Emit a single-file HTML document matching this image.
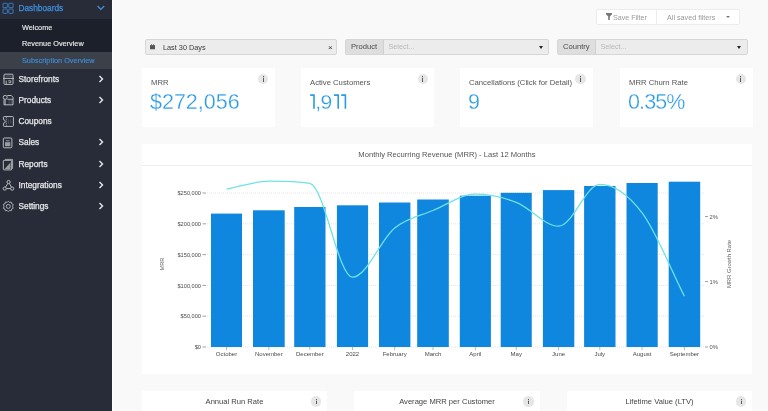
<!DOCTYPE html>
<html><head><meta charset="utf-8">
<style>
*{box-sizing:border-box;margin:0;padding:0}
html,body{width:768px;height:411px;overflow:hidden;background:#f9f9f9;font-family:"Liberation Sans",sans-serif}
.abs{position:absolute}
body{will-change:transform}
.nav .t{-webkit-text-stroke:0.25px currentColor}
.si{-webkit-text-stroke:0.12px currentColor}
#sb{position:absolute;left:0;top:0;width:112px;height:411px;background:#272c38}
.nav{position:absolute;left:0;width:112px;height:21px;color:#e9eaec;font-size:8.3px}
.nav .t{position:absolute;left:18.5px;top:50%;transform:translateY(-50%);white-space:nowrap}
.nav svg.ic{position:absolute;left:3px;top:50%;margin-top:-5.5px}
.nav svg.ch{position:absolute;left:97px;top:50%;margin-top:-4px}
#sub{position:absolute;left:0;top:18px;width:112px;height:51px;background:#1c202a}
.si{position:absolute;left:22px;font-size:7.3px;color:#eeeeee;white-space:nowrap}
#hl{position:absolute;left:0;top:52px;width:112px;height:17px;background:#3c4049}
.card{position:absolute;background:#fff}
.lbl{position:absolute;font-size:7.7px;color:#545454;white-space:nowrap}
.val{position:absolute;font-size:21.5px;color:#2b9be6;white-space:nowrap;letter-spacing:0px;-webkit-text-stroke:0.28px #fff}
.info{position:absolute;width:10.6px;height:10.6px;border-radius:50%;background:#e6e6e6;font-size:0}.info::after{content:"";position:absolute;left:4.8px;top:2.3px;width:1px;height:5.8px;background:linear-gradient(#5a5a5a 0,#5a5a5a 1.2px,#bbb 1.2px,#bbb 1.7px,#5a5a5a 1.7px)}
.sel{position:absolute;top:39px;height:15.5px;background:#ececec;border:1px solid #d6d6d6;border-radius:2px}
.sel .lab{position:absolute;left:0;top:0;bottom:0;background:#dedede;border-right:1px solid #d0d0d0;font-size:7.6px;color:#4a4a4a;line-height:13.5px;padding-left:5px}
.sel .ph{position:absolute;top:0;font-size:7.2px;color:#b8b8b8;line-height:13.5px}
.caret{position:absolute;width:0;height:0;border-left:2.7px solid transparent;border-right:2.7px solid transparent;border-top:3.2px solid #222}
.ax{position:absolute;font-size:6px;color:#444;white-space:nowrap}
</style></head><body>

<div class="abs" style="left:112px;top:0;width:2px;height:411px;background:#fdfdfd"></div>
<div id="sb">
  <div id="sub" style="top:19.4px;height:32.6px"></div>
  <div id="hl"></div>
  <svg class="abs" style="left:0;top:0" width="20" height="220" viewBox="0 0 20 220" fill="none" stroke-linejoin="round">
    <g stroke="#3a80c8" stroke-width="0.9">
      <rect x="3" y="3.3" width="4.3" height="4.3" rx="0.4"/><rect x="8.8" y="3.3" width="4.3" height="4.3" rx="0.4"/>
      <rect x="3" y="9" width="4.3" height="4.3" rx="0.4"/><rect x="8.8" y="9" width="4.3" height="4.3" rx="0.4"/>
    </g>
    <g stroke="#b9bbc0" stroke-width="1">
      <rect x="4" y="74.2" width="9" height="10.2" rx="0.8"/>
      <path d="M3 78.4H14"/>
      <path d="M5.5 76.2H11.5" stroke="#555a63" stroke-width="1.2"/>
      <path d="M6.2 84V80.6M8.2 80.8H10.8V82.6H8.6" stroke-width="0.9"/>
    </g>
    <g stroke="#b9bbc0" stroke-width="1">
      <path d="M4 99.5V104.8H13V97.3L11.3 95.5H7.3"/>
      <circle cx="5.2" cy="97.4" r="2"/>
      <path d="M5.2 99.4V104.8M7.4 99.3H13" stroke-width="0.9"/>
      <path d="M9.2 100V104.3M11.2 100V104.3" stroke="#6a6d74" stroke-width="0.7"/>
    </g>
    <g stroke="#b9bbc0" stroke-width="1">
      <path d="M4.2 116.6H12.6A0.8 0.8 0 0 1 13.4 117.4V125.6A0.8 0.8 0 0 1 12.6 126.4H4.2A0.8 0.8 0 0 1 3.4 125.6V123.3A1.8 1.8 0 0 0 3.4 119.7V117.4A0.8 0.8 0 0 1 4.2 116.6Z"/>
      <path d="M6.4 117.2V126" stroke-dasharray="1.1 0.9" stroke-width="0.8"/>
      <path d="M8.6 119.3V123.8M10.8 119.3V123.8" stroke="#5f626a" stroke-width="0.6"/>
    </g>
    <g stroke="#b9bbc0" stroke-width="1">
      <rect x="3.3" y="138" width="8.6" height="9.8" rx="1"/>
      <rect x="5" y="142.2" width="5.3" height="4" fill="#9a9ca2" stroke="none"/>
      <path d="M6 140.8H9.5" stroke-width="0.8"/>
    </g>
    <g stroke="#b9bbc0" stroke-width="1">
      <rect x="3.3" y="160.3" width="8.4" height="9.6" rx="0.8"/>
      <path d="M5 159.4H12.6V168.8" stroke-width="0.8"/>
      <path d="M4.5 169L10.5 162.5V169Z" fill="#9a9ca2" stroke="none"/>
    </g>
    <g stroke="#b9bbc0" stroke-width="1">
      <circle cx="8.6" cy="182" r="1.6"/><circle cx="4.7" cy="188.6" r="1.6"/><circle cx="12.2" cy="188.6" r="1.6"/>
      <path d="M7.8 183.4L5.5 187.2M9.4 183.4L11.4 187.2M6.3 188.6H10.6"/>
    </g>
    <g stroke="#b9bbc0" stroke-width="0.9">
      <circle cx="8.3" cy="206.4" r="2"/>
      <path d="M8.3 201.2L9.5 202.4L11.2 202L11.6 203.7L13.2 204.4L12.6 206.4L13.2 208.4L11.6 209.1L11.2 210.8L9.5 210.4L8.3 211.6L7.1 210.4L5.4 210.8L5 209.1L3.4 208.4L4 206.4L3.4 204.4L5 203.7L5.4 202L7.1 202.4Z"/>
    </g>
  </svg>

  <div class="nav" style="top:-2.5px;color:#3f8fdc">
    <span class="t">Dashboards</span>
    <svg class="ch" width="8" height="8" viewBox="0 0 8 8" fill="none" stroke="#4a8ee0" stroke-width="1.2" style="left:96.5px"><path d="M0.6 2 L3.9 5.3 L7.2 2"/></svg>
  </div>
  <div class="si" style="top:22.7px">Welcome</div>
  <div class="si" style="top:39.1px">Revenue Overview</div>
  <div class="si" style="top:55.7px;color:#3f8fdc">Subscription Overview</div>

  <div class="nav" style="top:68px">
    <span class="t">Storefronts</span>
    <svg class="ch" width="8" height="8" viewBox="0 0 8 8" fill="none" stroke="#e9eaec" stroke-width="1.4"><path d="M2.5 1 L5.5 4 L2.5 7"/></svg>
  </div>
  <div class="nav" style="top:89.5px">
    <span class="t">Products</span>
    <svg class="ch" width="8" height="8" viewBox="0 0 8 8" fill="none" stroke="#e9eaec" stroke-width="1.4"><path d="M2.5 1 L5.5 4 L2.5 7"/></svg>
  </div>
  <div class="nav" style="top:110.5px">
    <span class="t">Coupons</span>
  </div>
  <div class="nav" style="top:131.5px">
    <span class="t">Sales</span>
    <svg class="ch" width="8" height="8" viewBox="0 0 8 8" fill="none" stroke="#e9eaec" stroke-width="1.4"><path d="M2.5 1 L5.5 4 L2.5 7"/></svg>
  </div>
  <div class="nav" style="top:153px">
    <span class="t">Reports</span>
    <svg class="ch" width="8" height="8" viewBox="0 0 8 8" fill="none" stroke="#e9eaec" stroke-width="1.4"><path d="M2.5 1 L5.5 4 L2.5 7"/></svg>
  </div>
  <div class="nav" style="top:174px">
    <span class="t">Integrations</span>
    <svg class="ch" width="8" height="8" viewBox="0 0 8 8" fill="none" stroke="#e9eaec" stroke-width="1.4"><path d="M2.5 1 L5.5 4 L2.5 7"/></svg>
  </div>
  <div class="nav" style="top:195.5px">
    <span class="t">Settings</span>
    <svg class="ch" width="8" height="8" viewBox="0 0 8 8" fill="none" stroke="#e9eaec" stroke-width="1.4"><path d="M2.5 1 L5.5 4 L2.5 7"/></svg>
  </div>
</div>

<!-- top buttons -->
<div class="abs" style="left:596px;top:8.7px;width:144px;height:16.5px;background:#fff;border:1px solid #ececec;border-radius:2px"></div>
<div class="abs" style="left:655.8px;top:8.7px;width:1px;height:16.5px;background:#ececec"></div>
<svg class="abs" style="left:606px;top:12.5px" width="6" height="7" viewBox="0 0 6 7"><path d="M0 0h6v1.2L3.8 3.4V7H2.2V3.4L0 1.2z" fill="#777"/></svg>
<div class="abs" style="left:613px;top:14px;font-size:7.1px;color:#999">Save Filter</div>
<div class="abs" style="left:667px;top:12.5px;font-size:7.2px;color:#999">All saved filters</div>
<div class="caret" style="left:726px;top:16px;border-left-width:2.5px;border-right-width:2.5px;border-top:2.5px solid #777"></div>

<!-- selects -->
<div class="sel" style="left:145px;width:192px">
  <svg class="abs" style="left:4px;top:4px" width="5" height="5.5" viewBox="0 0 5 5"><rect x="0" y="0.9" width="5" height="4.1" fill="#555"/><rect x="1" y="0" width="0.8" height="1.2" fill="#555"/><rect x="3.2" y="0" width="0.8" height="1.2" fill="#555"/></svg>
  <div class="abs" style="left:17px;top:0.8px;font-size:7.3px;color:#3a3a3a;line-height:13.5px">Last 30 Days</div>
  <div class="abs" style="left:182px;top:0.5px;font-size:8px;color:#333;line-height:13.5px">×</div>
</div>
<div class="sel" style="left:345px;width:204px">
  <div class="lab" style="width:37.5px">Product</div>
  <div class="ph" style="left:42.5px">Select...</div>
  <div class="caret" style="left:192.5px;top:5.5px"></div>
</div>
<div class="sel" style="left:557px;width:191px">
  <div class="lab" style="width:37.5px">Country</div>
  <div class="ph" style="left:42.5px">Select...</div>
  <div class="caret" style="left:179px;top:5.5px"></div>
</div>

<!-- stat cards -->
<div class="card" style="left:142px;top:68px;width:133px;height:59.4px">
  <div class="lbl" style="left:9px;top:10px">MRR</div>
  <div class="val" style="left:8px;top:22px">$272,056</div>
  <div class="info" style="left:115.8px;top:5.7px">i</div>
</div>
<div class="card" style="left:301px;top:68px;width:133px;height:59.4px">
  <div class="lbl" style="left:9px;top:10px">Active Customers</div>
  <svg class="abs" style="left:4px;top:20px" width="50" height="27" viewBox="305 88 50 27"><path d="M310.2 95.1H314V108.7M334 95.1H338.2V108.7M341.2 95.1H345.4V108.7" fill="none" stroke="#2b9be6" stroke-width="1.6"/><text x="315.2" y="108.7" font-size="21.1" fill="#2b9be6" stroke="#fff" stroke-width="0.28" font-family="Liberation Sans">,</text><text x="320.6" y="108.7" font-size="21.1" fill="#2b9be6" stroke="#fff" stroke-width="0.28" font-family="Liberation Sans">9</text></svg>
  <div class="info" style="left:116.6px;top:5.7px">i</div>
</div>
<div class="card" style="left:460px;top:68px;width:133px;height:59.4px">
  <div class="lbl" style="left:9px;top:10px">Cancellations (Click for Detail)</div>
  <div class="val" style="left:8px;top:22px">9</div>
  <div class="info" style="left:115px;top:5.7px">i</div>
</div>
<div class="card" style="left:620px;top:68px;width:133px;height:59.4px">
  <div class="lbl" style="left:9px;top:10px">MRR Churn Rate</div>
  <div class="val" style="left:8px;top:22px;letter-spacing:-0.9px">0.35%</div>
  <div class="info" style="left:115.5px;top:5.7px">i</div>
</div>

<!-- chart card -->
<div class="card" style="left:142px;top:144px;width:610px;height:230px">
  <div class="abs" style="left:0;top:21px;width:610px;height:1px;background:#eeeeee"></div>
  <div class="abs" style="left:0;width:610px;text-align:center;font-size:7.6px;color:#555;top:6px">Monthly Recurring Revenue (MRR) - Last 12 Months</div>
</div>
<svg id="chart" class="abs" style="left:0;top:0;font-family:'Liberation Sans',sans-serif" width="768" height="411">
<line x1="207" y1="193.0" x2="705" y2="193.0" stroke="#dddddd" stroke-width="0.8" stroke-dasharray="1 1"/>
<line x1="202.5" y1="193.0" x2="206" y2="193.0" stroke="#777" stroke-width="0.7"/>
<text x="201" y="193.0" text-anchor="end" font-size="5.65" fill="#4a4a4a" dy="2.1">$250,000</text>
<line x1="207" y1="223.8" x2="705" y2="223.8" stroke="#dddddd" stroke-width="0.8" stroke-dasharray="1 1"/>
<line x1="202.5" y1="223.8" x2="206" y2="223.8" stroke="#777" stroke-width="0.7"/>
<text x="201" y="223.8" text-anchor="end" font-size="5.65" fill="#4a4a4a" dy="2.1">$200,000</text>
<line x1="207" y1="254.6" x2="705" y2="254.6" stroke="#dddddd" stroke-width="0.8" stroke-dasharray="1 1"/>
<line x1="202.5" y1="254.6" x2="206" y2="254.6" stroke="#777" stroke-width="0.7"/>
<text x="201" y="254.6" text-anchor="end" font-size="5.65" fill="#4a4a4a" dy="2.1">$150,000</text>
<line x1="207" y1="285.4" x2="705" y2="285.4" stroke="#dddddd" stroke-width="0.8" stroke-dasharray="1 1"/>
<line x1="202.5" y1="285.4" x2="206" y2="285.4" stroke="#777" stroke-width="0.7"/>
<text x="201" y="285.4" text-anchor="end" font-size="5.65" fill="#4a4a4a" dy="2.1">$100,000</text>
<line x1="207" y1="316.2" x2="705" y2="316.2" stroke="#dddddd" stroke-width="0.8" stroke-dasharray="1 1"/>
<line x1="202.5" y1="316.2" x2="206" y2="316.2" stroke="#777" stroke-width="0.7"/>
<text x="201" y="316.2" text-anchor="end" font-size="5.65" fill="#4a4a4a" dy="2.1">$50,000</text>
<line x1="207" y1="347.0" x2="705" y2="347.0" stroke="#dddddd" stroke-width="0.8" stroke-dasharray="1 1"/>
<line x1="202.5" y1="347.0" x2="206" y2="347.0" stroke="#777" stroke-width="0.7"/>
<text x="201" y="347.0" text-anchor="end" font-size="5.65" fill="#4a4a4a" dy="2.1">$0</text>
<rect x="211.00" y="213.60" width="31.00" height="133.40" fill="#1087de"/>
<rect x="253.00" y="210.30" width="31.70" height="136.70" fill="#1087de"/>
<rect x="294.20" y="207.00" width="31.30" height="140.00" fill="#1087de"/>
<rect x="336.90" y="205.30" width="31.20" height="141.70" fill="#1087de"/>
<rect x="379.00" y="202.50" width="31.40" height="144.50" fill="#1087de"/>
<rect x="417.20" y="199.50" width="31.60" height="147.50" fill="#1087de"/>
<rect x="459.80" y="195.70" width="31.10" height="151.30" fill="#1087de"/>
<rect x="500.70" y="192.80" width="31.05" height="154.20" fill="#1087de"/>
<rect x="542.90" y="190.10" width="31.40" height="156.90" fill="#1087de"/>
<rect x="584.10" y="186.00" width="31.40" height="161.00" fill="#1087de"/>
<rect x="626.50" y="183.00" width="31.20" height="164.00" fill="#1087de"/>
<rect x="668.70" y="181.70" width="31.50" height="165.30" fill="#1087de"/>
<line x1="226.50" y1="347" x2="226.50" y2="350" stroke="#888" stroke-width="0.6"/>
<text x="226.50" y="356" text-anchor="middle" font-size="6" fill="#4a4a4a">October</text>
<line x1="268.85" y1="347" x2="268.85" y2="350" stroke="#888" stroke-width="0.6"/>
<text x="268.85" y="356" text-anchor="middle" font-size="6" fill="#4a4a4a">November</text>
<line x1="309.85" y1="347" x2="309.85" y2="350" stroke="#888" stroke-width="0.6"/>
<text x="309.85" y="356" text-anchor="middle" font-size="6" fill="#4a4a4a">December</text>
<line x1="352.50" y1="347" x2="352.50" y2="350" stroke="#888" stroke-width="0.6"/>
<text x="352.50" y="356" text-anchor="middle" font-size="6" fill="#4a4a4a">2022</text>
<line x1="394.70" y1="347" x2="394.70" y2="350" stroke="#888" stroke-width="0.6"/>
<text x="394.70" y="356" text-anchor="middle" font-size="6" fill="#4a4a4a">February</text>
<line x1="433.00" y1="347" x2="433.00" y2="350" stroke="#888" stroke-width="0.6"/>
<text x="433.00" y="356" text-anchor="middle" font-size="6" fill="#4a4a4a">March</text>
<line x1="475.35" y1="347" x2="475.35" y2="350" stroke="#888" stroke-width="0.6"/>
<text x="475.35" y="356" text-anchor="middle" font-size="6" fill="#4a4a4a">April</text>
<line x1="516.23" y1="347" x2="516.23" y2="350" stroke="#888" stroke-width="0.6"/>
<text x="516.23" y="356" text-anchor="middle" font-size="6" fill="#4a4a4a">May</text>
<line x1="558.60" y1="347" x2="558.60" y2="350" stroke="#888" stroke-width="0.6"/>
<text x="558.60" y="356" text-anchor="middle" font-size="6" fill="#4a4a4a">June</text>
<line x1="599.80" y1="347" x2="599.80" y2="350" stroke="#888" stroke-width="0.6"/>
<text x="599.80" y="356" text-anchor="middle" font-size="6" fill="#4a4a4a">July</text>
<line x1="642.10" y1="347" x2="642.10" y2="350" stroke="#888" stroke-width="0.6"/>
<text x="642.10" y="356" text-anchor="middle" font-size="6" fill="#4a4a4a">August</text>
<line x1="684.45" y1="347" x2="684.45" y2="350" stroke="#888" stroke-width="0.6"/>
<text x="684.45" y="356" text-anchor="middle" font-size="6" fill="#4a4a4a">September</text>
<line x1="705" y1="216.5" x2="708" y2="216.5" stroke="#777" stroke-width="0.7"/>
<text x="709.5" y="216.5" font-size="5.8" fill="#555" dy="2.1">2%</text>
<line x1="705" y1="281.5" x2="708" y2="281.5" stroke="#777" stroke-width="0.7"/>
<text x="709.5" y="281.5" font-size="5.8" fill="#555" dy="2.1">1%</text>
<line x1="705" y1="347.0" x2="708" y2="347.0" stroke="#777" stroke-width="0.7"/>
<text x="709.5" y="347.0" font-size="5.8" fill="#555" dy="2.1">0%</text>
<path d="M226.50 189.20 C240.62 186.53 254.73 181.20 268.85 181.20 C282.52 181.20 296.18 181.20 309.85 183.30 C324.07 185.48 338.28 277.20 352.50 277.20 C366.57 277.20 380.63 239.41 394.70 228.00 C407.47 217.64 420.23 215.87 433.00 210.50 C447.12 204.56 461.23 194.20 475.35 194.20 C488.98 194.20 502.60 197.11 516.23 202.30 C530.35 207.68 544.47 226.20 558.60 226.20 C572.33 226.20 586.07 184.40 599.80 184.40 C613.90 184.40 628.00 194.27 642.10 212.90 C656.22 231.56 670.33 268.50 684.45 296.30" fill="none" stroke="#6ee2e2" stroke-width="1.3"/>
<text x="0" y="0" transform="translate(163.5 264) rotate(-90)" text-anchor="middle" font-size="5.5" fill="#666">MRR</text>
<text x="0" y="0" transform="translate(731 264) rotate(-90)" text-anchor="middle" font-size="5.9" fill="#666">MRR Growth Rate</text>
</svg>

<!-- bottom cards -->
<div class="card" style="left:142px;top:391px;width:185px;height:30px">
  <div class="abs" style="left:0;top:5.6px;width:185px;text-align:center;font-size:7.6px;color:#444">Annual Run Rate</div>
  <div class="info" style="left:168.8px;top:5.3px">i</div>
</div>
<div class="card" style="left:354px;top:391px;width:186px;height:30px">
  <div class="abs" style="left:0;top:5.6px;width:186px;text-align:center;font-size:7.6px;color:#444">Average MRR per Customer</div>
  <div class="info" style="left:169.4px;top:5.3px">i</div>
</div>
<div class="card" style="left:567px;top:391px;width:185px;height:30px">
  <div class="abs" style="left:0;top:5.6px;width:185px;text-align:center;font-size:7.6px;color:#444">Lifetime Value (LTV)</div>
  <div class="info" style="left:168.8px;top:5.3px">i</div>
</div>
</body></html>
